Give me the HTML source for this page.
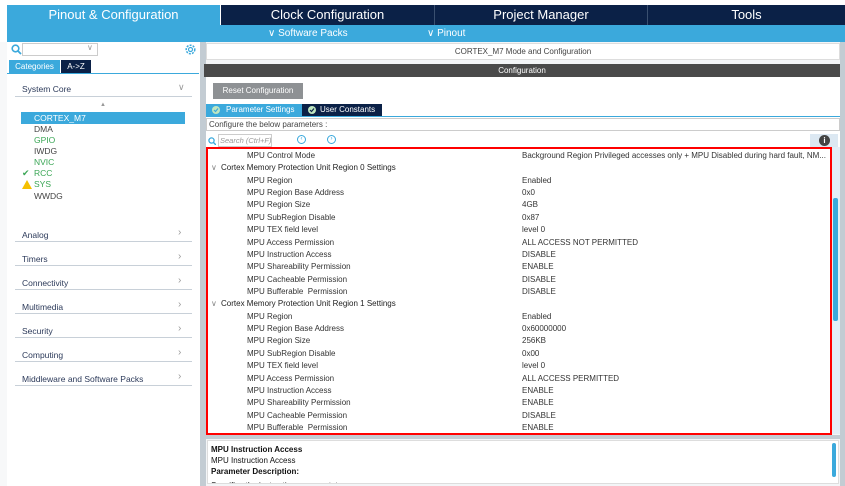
<!DOCTYPE html>
<html><head><meta charset="utf-8"><style>
*{margin:0;padding:0;box-sizing:border-box}
body{width:845px;height:486px;overflow:hidden;background:#fff;font-family:"Liberation Sans",Arial,sans-serif;position:relative;color:#333}
.a{position:absolute}
.tab{position:absolute;top:5px;height:20px;color:#fff;font-size:13px;text-align:center;line-height:20px}
.t{position:absolute;font-size:8px;white-space:nowrap;line-height:12px;color:#333}
.cat{position:absolute;left:22px;font-size:8.5px;color:#2c3a5a}
.arr{position:absolute;left:178px;font-size:10px;color:#999}
.ln{position:absolute;left:15px;width:177px;height:1px;background:#c8d0d8}
.li{position:absolute;left:34px;font-size:8.5px;line-height:11px}
</style></head><body>
<div class="tab" style="left:7px;width:213px;background:#3ba9dc">Pinout &amp; Configuration</div>
<div class="tab" style="left:221px;width:213px;background:#0b2147">Clock Configuration</div>
<div class="tab" style="left:435px;width:212px;background:#0b2147">Project Manager</div>
<div class="tab" style="left:648px;width:197px;background:#0b2147">Tools</div>
<div class="a" style="left:434px;top:5px;width:1px;height:20px;background:#3a5070"></div>
<div class="a" style="left:647px;top:5px;width:1px;height:20px;background:#3a5070"></div>
<div class="a" style="left:7px;top:25px;width:838px;height:17px;background:#3ba9dc"></div>
<div class="a" style="left:268px;top:26px;color:#fff;font-size:10px;line-height:15px">&#8744; Software Packs</div>
<div class="a" style="left:427px;top:26px;color:#fff;font-size:10px;line-height:15px">&#8744; Pinout</div>

<div class="a" style="left:0;top:42px;width:7px;height:444px;background:#f7f8f9"></div>
<div class="a" style="left:200px;top:42px;width:6px;height:444px;background:#c3ccd3"></div>
<svg class="a" style="left:11px;top:44px" width="11" height="11"><circle cx="4.5" cy="4.5" r="3.3" fill="none" stroke="#3ba9dc" stroke-width="1.6"/><line x1="7" y1="7" x2="10" y2="10" stroke="#3ba9dc" stroke-width="1.8"/></svg>
<div class="a" style="left:22px;top:43px;width:76px;height:13px;border:1px solid #ccc"></div>
<div class="a" style="left:87px;top:43px;font-size:8px;color:#999">&#8744;</div>
<svg class="a" style="left:185px;top:44px" width="11" height="11"><circle cx="5.5" cy="5.5" r="4.3" fill="none" stroke="#3ba9dc" stroke-width="1.5" stroke-dasharray="2 1.2"/><circle cx="5.5" cy="5.5" r="2" fill="none" stroke="#3ba9dc" stroke-width="1.2"/></svg>
<div class="a" style="left:9px;top:60px;width:51px;height:13px;background:#3ba9dc;color:#fff;font-size:8px;line-height:13px;text-align:center">Categories</div>
<div class="a" style="left:61px;top:60px;width:30px;height:13px;background:#0b2147;color:#fff;font-size:8px;line-height:13px;text-align:center">A-&gt;Z</div>
<div class="a" style="left:7px;top:73px;width:192px;height:1px;background:#3ba9dc"></div>
<div class="cat" style="top:84px">System Core</div><div class="arr" style="top:82px;font-size:9px">&#8744;</div>
<div class="ln" style="top:96px"></div>
<div class="a" style="left:100px;top:102px;font-size:6px;color:#999">&#9650;</div>
<div class="a" style="left:21px;top:112px;width:164px;height:12px;background:#3ba9dc"></div>
<div class="li" style="top:113px;color:#fff">CORTEX_M7</div>
<div class="li" style="top:124px;color:#444">DMA</div>
<div class="li" style="top:135px;color:#3aa655">GPIO</div>
<div class="li" style="top:146px;color:#444">IWDG</div>
<div class="li" style="top:157px;color:#3aa655">NVIC</div>
<div class="li" style="top:168px;color:#3aa655">RCC</div>
<div class="a" style="left:22px;top:168px;font-size:9px;color:#3aa655;line-height:11px">&#10004;</div>
<div class="li" style="top:179px;color:#3aa655">SYS</div>
<svg class="a" style="left:22px;top:180px" width="10" height="9"><polygon points="5,0 10,9 0,9" fill="#f5c000"/></svg>
<div class="li" style="top:191px;color:#444">WWDG</div>
<div class="cat" style="top:230px">Analog</div><div class="arr" style="top:227px">&#8250;</div><div class="ln" style="top:241px"></div>
<div class="cat" style="top:254px">Timers</div><div class="arr" style="top:251px">&#8250;</div><div class="ln" style="top:265px"></div>
<div class="cat" style="top:278px">Connectivity</div><div class="arr" style="top:275px">&#8250;</div><div class="ln" style="top:289px"></div>
<div class="cat" style="top:302px">Multimedia</div><div class="arr" style="top:299px">&#8250;</div><div class="ln" style="top:313px"></div>
<div class="cat" style="top:326px">Security</div><div class="arr" style="top:323px">&#8250;</div><div class="ln" style="top:337px"></div>
<div class="cat" style="top:350px">Computing</div><div class="arr" style="top:347px">&#8250;</div><div class="ln" style="top:361px"></div>
<div class="cat" style="top:374px">Middleware and Software Packs</div><div class="arr" style="top:371px">&#8250;</div><div class="ln" style="top:385px"></div>

<div class="a" style="left:206px;top:42px;width:639px;height:444px;background:#f3f5f7"></div>
<div class="a" style="left:206px;top:43px;width:634px;height:17px;background:#fff;border:1px solid #ddd;font-size:8px;line-height:15px;text-align:center;color:#444">CORTEX_M7 Mode and Configuration</div>
<div class="a" style="left:840px;top:42px;width:5px;height:444px;background:#c3ccd3"></div>
<div class="a" style="left:204px;top:64px;width:636px;height:13px;background:#4a4a4a;color:#fff;font-size:8px;line-height:13px;text-align:center">Configuration</div>
<div class="a" style="left:206px;top:77px;width:634px;height:357px;background:#fff"></div>
<div class="a" style="left:213px;top:83px;width:90px;height:16px;background:#8e9194;color:#fff;font-size:8px;line-height:16px;text-align:center">Reset Configuration</div>
<div class="a" style="left:206px;top:104px;width:96px;height:12px;background:#3ba9dc;color:#fff;font-size:8px;line-height:12px;padding-left:20px;white-space:nowrap">Parameter Settings</div>
<div class="a" style="left:302px;top:104px;width:80px;height:12px;background:#0b2147;color:#fff;font-size:8px;line-height:12px;padding-left:18px;white-space:nowrap">User Constants</div>
<svg class="a" style="left:212px;top:106px" width="8" height="8"><circle cx="4" cy="4" r="4" fill="#bfe6c0"/><path d="M2,4 L3.5,5.5 L6,2.5" stroke="#3ba9dc" fill="none" stroke-width="1.2"/></svg>
<svg class="a" style="left:308px;top:106px" width="8" height="8"><circle cx="4" cy="4" r="4" fill="#bfe6c0"/><path d="M2,4 L3.5,5.5 L6,2.5" stroke="#0b2147" fill="none" stroke-width="1.2"/></svg>
<div class="a" style="left:206px;top:116px;width:634px;height:1px;background:#3ba9dc"></div>
<div class="a" style="left:206px;top:118px;width:634px;height:13px;border:1px solid #ccc;font-size:8px;line-height:11px;padding-left:2px;color:#444">Configure the below parameters :</div>
<svg class="a" style="left:208px;top:137px" width="8" height="8"><circle cx="3.5" cy="3.5" r="2.6" fill="none" stroke="#3ba9dc" stroke-width="1.3"/><line x1="5.5" y1="5.5" x2="8" y2="8" stroke="#3ba9dc" stroke-width="1.4"/></svg>
<div class="a" style="left:218px;top:134px;width:54px;height:13px;border:1px solid #ccc;font-size:7.5px;font-style:italic;color:#999;line-height:11px;padding-left:1px;white-space:nowrap;overflow:hidden">Search (Ctrl+F)</div>
<div class="a" style="left:297px;top:135px;width:9px;height:9px;border:1px solid #3ba9dc;border-radius:50%;font-size:6px;color:#3ba9dc;line-height:7px;text-align:center">&#8249;</div>
<div class="a" style="left:327px;top:135px;width:9px;height:9px;border:1px solid #3ba9dc;border-radius:50%;font-size:6px;color:#3ba9dc;line-height:7px;text-align:center">&#8250;</div>
<div class="a" style="left:810px;top:134px;width:28px;height:13px;background:#dce8f2"></div>
<div class="a" style="left:819px;top:135px;width:11px;height:11px;border-radius:50%;background:#444;color:#fff;font-size:8px;font-weight:bold;line-height:11px;text-align:center">i</div>
<div class="a" style="left:831px;top:147px;width:9px;height:287px;background:#e3eef7"></div>
<div class="a" style="left:833px;top:198px;width:5px;height:123px;background:#3ba9dc;border-radius:2px"></div>
<div class="a" style="left:206px;top:147px;width:626px;height:288px;border:2px solid #f00"></div>
<div class="t" style="left:247px;top:150px">MPU Control Mode</div><div class="t" style="left:522px;top:150px">Background Region Privileged accesses only + MPU Disabled during hard fault, NM...</div>
<div class="t" style="left:211px;top:162px;color:#888">&#8744;</div><div class="t" style="left:221px;top:162px;color:#222">Cortex Memory Protection Unit Region 0 Settings</div>
<div class="t" style="left:247px;top:175px">MPU Region</div><div class="t" style="left:522px;top:175px">Enabled</div>
<div class="t" style="left:247px;top:187px">MPU Region Base Address</div><div class="t" style="left:522px;top:187px">0x0</div>
<div class="t" style="left:247px;top:199px">MPU Region Size</div><div class="t" style="left:522px;top:199px">4GB</div>
<div class="t" style="left:247px;top:212px">MPU SubRegion Disable</div><div class="t" style="left:522px;top:212px">0x87</div>
<div class="t" style="left:247px;top:224px">MPU TEX field level</div><div class="t" style="left:522px;top:224px">level 0</div>
<div class="t" style="left:247px;top:237px">MPU Access Permission</div><div class="t" style="left:522px;top:237px">ALL ACCESS NOT PERMITTED</div>
<div class="t" style="left:247px;top:249px">MPU Instruction Access</div><div class="t" style="left:522px;top:249px">DISABLE</div>
<div class="t" style="left:247px;top:261px">MPU Shareability Permission</div><div class="t" style="left:522px;top:261px">ENABLE</div>
<div class="t" style="left:247px;top:274px">MPU Cacheable Permission</div><div class="t" style="left:522px;top:274px">DISABLE</div>
<div class="t" style="left:247px;top:286px">MPU Bufferable&nbsp; Permission</div><div class="t" style="left:522px;top:286px">DISABLE</div>
<div class="t" style="left:211px;top:298px;color:#888">&#8744;</div><div class="t" style="left:221px;top:298px;color:#222">Cortex Memory Protection Unit Region 1 Settings</div>
<div class="t" style="left:247px;top:311px">MPU Region</div><div class="t" style="left:522px;top:311px">Enabled</div>
<div class="t" style="left:247px;top:323px">MPU Region Base Address</div><div class="t" style="left:522px;top:323px">0x60000000</div>
<div class="t" style="left:247px;top:335px">MPU Region Size</div><div class="t" style="left:522px;top:335px">256KB</div>
<div class="t" style="left:247px;top:348px">MPU SubRegion Disable</div><div class="t" style="left:522px;top:348px">0x00</div>
<div class="t" style="left:247px;top:360px">MPU TEX field level</div><div class="t" style="left:522px;top:360px">level 0</div>
<div class="t" style="left:247px;top:373px">MPU Access Permission</div><div class="t" style="left:522px;top:373px">ALL ACCESS PERMITTED</div>
<div class="t" style="left:247px;top:385px">MPU Instruction Access</div><div class="t" style="left:522px;top:385px">ENABLE</div>
<div class="t" style="left:247px;top:397px">MPU Shareability Permission</div><div class="t" style="left:522px;top:397px">ENABLE</div>
<div class="t" style="left:247px;top:410px">MPU Cacheable Permission</div><div class="t" style="left:522px;top:410px">DISABLE</div>
<div class="t" style="left:247px;top:422px">MPU Bufferable&nbsp; Permission</div><div class="t" style="left:522px;top:422px">ENABLE</div>
<div class="a" style="left:206px;top:435px;width:634px;height:4px;background:#c3ccd3"></div>
<div class="a" style="left:207px;top:440px;width:632px;height:44px;background:#fff;border:1px solid #ddd;overflow:hidden">
<div style="font-size:8px;line-height:11px;padding:3px 0 0 3px;color:#111"><b>MPU Instruction Access</b><br>MPU Instruction Access<br><b>Parameter Description:</b><br><span style="position:relative;top:3px">Specifies the instruction access status</span></div>
</div>
<div class="a" style="left:832px;top:443px;width:4px;height:34px;background:#3ba9dc;border-radius:2px"></div>
</body></html>
